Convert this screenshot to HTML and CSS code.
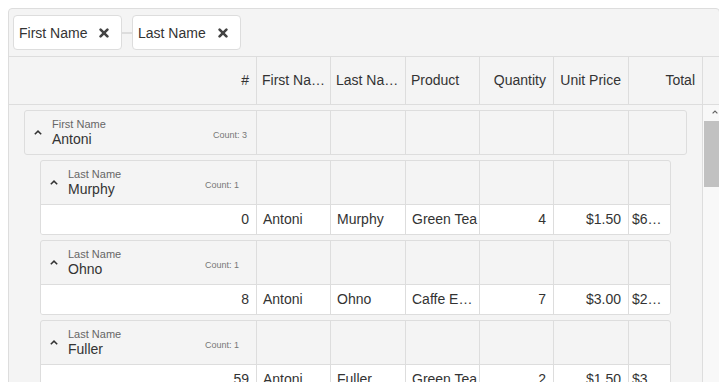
FILE: index.html
```html
<!DOCTYPE html>
<html>
<head>
<meta charset="utf-8">
<link rel="stylesheet" href="styles.css">
</head>
<body>
<div class="grid">
  <div class="group-panel">
    <div class="chip"><span>First Name</span><svg class="x" viewBox="0 0 10 10"><path d="M1.6 1.6L8.4 8.4M8.4 1.6L1.6 8.4"/></svg></div>
    <div class="connector"></div>
    <div class="chip"><span>Last Name</span><svg class="x" viewBox="0 0 10 10"><path d="M1.6 1.6L8.4 8.4M8.4 1.6L1.6 8.4"/></svg></div>
  </div>
  <div class="header">
    <div class="hc r">#</div>
    <div class="hc">First Name</div>
    <div class="hc">Last Name</div>
    <div class="hc">Product</div>
    <div class="hc r">Quantity</div>
    <div class="hc r">Unit Price</div>
    <div class="hc r">Total</div>
    <div class="hc-fill"></div>
  </div>
  <div class="main">
    <div class="rows">
      <div class="block lvl0">
        <div class="grow">
          <div class="gcell">
            <svg class="caret" viewBox="0 0 8 5"><path d="M0.8 4.3L4 1.1L7.2 4.3"/></svg>
            <div class="labels"><div class="glabel">First Name</div><div class="gvalue">Antoni</div></div>
            <div class="count">Count: 3</div>
          </div>
          <div class="c"></div><div class="c"></div><div class="c"></div><div class="c"></div><div class="c"></div><div class="c"></div>
        </div>
      </div>
      <div class="block lvl1">
        <div class="grow">
          <div class="gcell">
            <svg class="caret" viewBox="0 0 8 5"><path d="M0.8 4.3L4 1.1L7.2 4.3"/></svg>
            <div class="labels"><div class="glabel">Last Name</div><div class="gvalue">Murphy</div></div>
            <div class="count">Count: 1</div>
          </div>
          <div class="c"></div><div class="c"></div><div class="c"></div><div class="c"></div><div class="c"></div><div class="c"></div>
        </div>
        <div class="drow">
          <div class="c r">0</div>
          <div class="c">Antoni</div>
          <div class="c">Murphy</div>
          <div class="c">Green Tea</div>
          <div class="c r">4</div>
          <div class="c r">$1.50</div>
          <div class="c tot">$6.00</div>
        </div>
      </div>
      <div class="block lvl1">
        <div class="grow">
          <div class="gcell">
            <svg class="caret" viewBox="0 0 8 5"><path d="M0.8 4.3L4 1.1L7.2 4.3"/></svg>
            <div class="labels"><div class="glabel">Last Name</div><div class="gvalue">Ohno</div></div>
            <div class="count">Count: 1</div>
          </div>
          <div class="c"></div><div class="c"></div><div class="c"></div><div class="c"></div><div class="c"></div><div class="c"></div>
        </div>
        <div class="drow">
          <div class="c r">8</div>
          <div class="c">Antoni</div>
          <div class="c">Ohno</div>
          <div class="c">Caffe Espresso</div>
          <div class="c r">7</div>
          <div class="c r">$3.00</div>
          <div class="c tot">$21.00</div>
        </div>
      </div>
      <div class="block lvl1">
        <div class="grow">
          <div class="gcell">
            <svg class="caret" viewBox="0 0 8 5"><path d="M0.8 4.3L4 1.1L7.2 4.3"/></svg>
            <div class="labels"><div class="glabel">Last Name</div><div class="gvalue">Fuller</div></div>
            <div class="count">Count: 1</div>
          </div>
          <div class="c"></div><div class="c"></div><div class="c"></div><div class="c"></div><div class="c"></div><div class="c"></div>
        </div>
        <div class="drow">
          <div class="c r">59</div>
          <div class="c">Antoni</div>
          <div class="c">Fuller</div>
          <div class="c">Green Tea</div>
          <div class="c r">2</div>
          <div class="c r">$1.50</div>
          <div class="c tot">$3.00</div>
        </div>
      </div>
    </div>
    <div class="vscroll">
      <div class="vbtn"><svg class="varrow" viewBox="0 0 6 4"><path d="M0.6 3.4L3 1L5.4 3.4"/></svg></div>
      <div class="thumb"></div>
    </div>
  </div>
</div>
</body>
</html>
```
FILE: styles.css
```css
* { box-sizing: border-box; }
html { overflow: hidden; }
body {
  margin: 8px;
  font-family: "Liberation Sans", Arial, sans-serif;
  font-size: 14px;
  color: #333;
  background: #fff;
}
.grid {
  width: 712px;
  height: 420px;
  border: 1px solid #ddd;
  border-radius: 4px 4px 0 0;
  background: #f4f4f4;
  display: flex;
  flex-direction: column;
  overflow: hidden;
}
.group-panel {
  display: flex;
  align-items: center;
  height: 47px;
  padding: 6px 4px;
  flex: none;
}
.chip {
  display: flex;
  align-items: center;
  width: 109px;
  height: 35px;
  border: 1px solid #ddd;
  border-radius: 4px;
  background: #fff;
  padding: 0 12px 0 5px;
  color: #333;
}
.chip .x {
  margin-left: auto;
  width: 10px;
  height: 10px;
  fill: none;
  stroke: #444;
  stroke-width: 2.6;
  stroke-linecap: round;
}
.connector {
  width: 10px;
  height: 2px;
  background: #ddd;
}
.header {
  flex: none;
  display: grid;
  grid-template-columns: 248px 74px 75px 74px 74px 75px 74px 1fr;
  height: 49px;
  border-top: 1px solid #ddd;
  border-bottom: 1px solid #ddd;
}
.hc {
  border-right: 1px solid #ddd;
  line-height: 47px;
  padding: 0 3px 0 5px;
  white-space: nowrap;
  overflow: hidden;
  text-overflow: ellipsis;
}
.hc.r, .c.r {
  text-align: right;
  padding: 0 7px 0 3px;
}
.main {
  flex: 1;
  display: flex;
  min-height: 0;
}
.rows {
  flex: 1;
  min-width: 0;
  padding-top: 5px;
}
.block {
  margin: 0 15px 5px 15px;
  border: 1px solid #ddd;
  border-radius: 3px;
  overflow: hidden;
}
.block.lvl1 {
  margin: 0 31px 5px 31px;
}
.grow, .drow {
  display: grid;
}
.lvl0 .grow, .lvl0 .drow {
  grid-template-columns: 232px 74px 75px 74px 74px 75px 1fr;
}
.lvl1 .grow, .lvl1 .drow {
  grid-template-columns: 216px 74px 75px 74px 74px 75px 1fr;
}
.grow {
  height: 43px;
}
.drow {
  height: 30px;
  border-top: 1px solid #ddd;
  background: #fff;
}
.c {
  border-right: 1px solid #ddd;
  line-height: 29px;
  padding: 0 0 0 6px;
  white-space: nowrap;
  overflow: hidden;
  text-overflow: ellipsis;
}
.c:last-child { border-right: 0; }
.c.tot {
  padding: 0 7px 0 3px;
}
.gcell {
  display: flex;
  align-items: center;
  border-right: 1px solid #ddd;
  padding-left: 9px;
  padding-right: 9px;
}
.lvl1 .gcell { padding-right: 17px; }
.caret {
  width: 8px;
  height: 5px;
  fill: none;
  stroke: #333;
  stroke-width: 1.5;
  flex: none;
}
.labels {
  margin-left: 10px;
}
.glabel {
  font-size: 11px;
  line-height: 13px;
  color: #666;
}
.gvalue {
  font-size: 14px;
  line-height: 16px;
  color: #333;
}
.count {
  margin-left: auto;
  margin-top: 5px;
  font-size: 9px;
  line-height: 10px;
  color: #777;
}
.vscroll {
  flex: none;
  width: 17px;
  border-left: 1px solid #ddd;
  background: #f8f8f8;
}
.vbtn {
  height: 16px;
  padding: 5px 0 0 9px;
}
.varrow {
  display: block;
  width: 6px;
  height: 4px;
  fill: none;
  stroke: #666;
  stroke-width: 1.2;
}
.thumb {
  margin-left: 1px;
  width: 15px;
  height: 66px;
  background: #c1c1c1;
}
```
